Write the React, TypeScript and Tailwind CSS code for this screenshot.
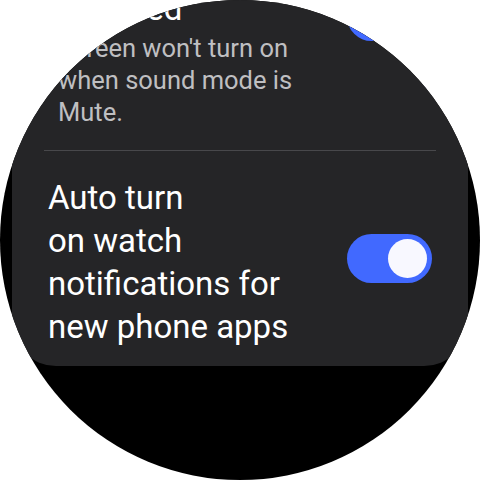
import React from 'react';

const Toggle = ({ on }: { on: boolean }) => (
  <div
    className={`flex h-[49px] w-[85px] shrink-0 items-center rounded-full px-[5px] ${
      on ? 'justify-end bg-[#4169ff]' : 'justify-start bg-[#5b5b5f]'
    }`}
  >
    <div className="h-[39px] w-[39px] rounded-full bg-[#f8f8ff]" />
  </div>
);

export default function App() {
  return (
    <div className="h-[480px] w-[480px] bg-white" style={{ fontFamily: 'Roboto, "Noto Sans", sans-serif' }}>
      <div className="h-[480px] w-[480px] overflow-hidden rounded-full bg-black">
        <div className="mx-[12px] mt-[-56px] rounded-b-[44px] bg-[#252527] pb-[18px]">
          {/* item above, mostly scrolled away */}
          <div className="flex items-start justify-between pl-[46px] pr-[36px]">
            <div className="flex flex-col">
              <div className="text-[33px] leading-[43px] text-white">
                Touch wake
                <br />
                disabled
              </div>
              <div className="mt-[2px] w-[260px] text-[25.5px] leading-[32px] text-[#bfbfc1]">
                Screen won't turn on when sound mode is Mute.
              </div>
            </div>
            <div className="mt-[48px]">
              <Toggle on />
            </div>
          </div>

          <div className="mx-[32px] mt-[22px] h-px bg-[#48484b]" />

          {/* auto turn on */}
          <div className="flex items-center justify-between pl-[36px] pr-[36px] pt-[25px]">
            <div className="text-[33px] leading-[43px] text-white">
              Auto turn
              <br />
              on watch
              <br />
              notifications for
              <br />
              new phone apps
            </div>
            <div className="mb-[7px]">
              <Toggle on />
            </div>
          </div>
        </div>
      </div>
    </div>
  );
}
